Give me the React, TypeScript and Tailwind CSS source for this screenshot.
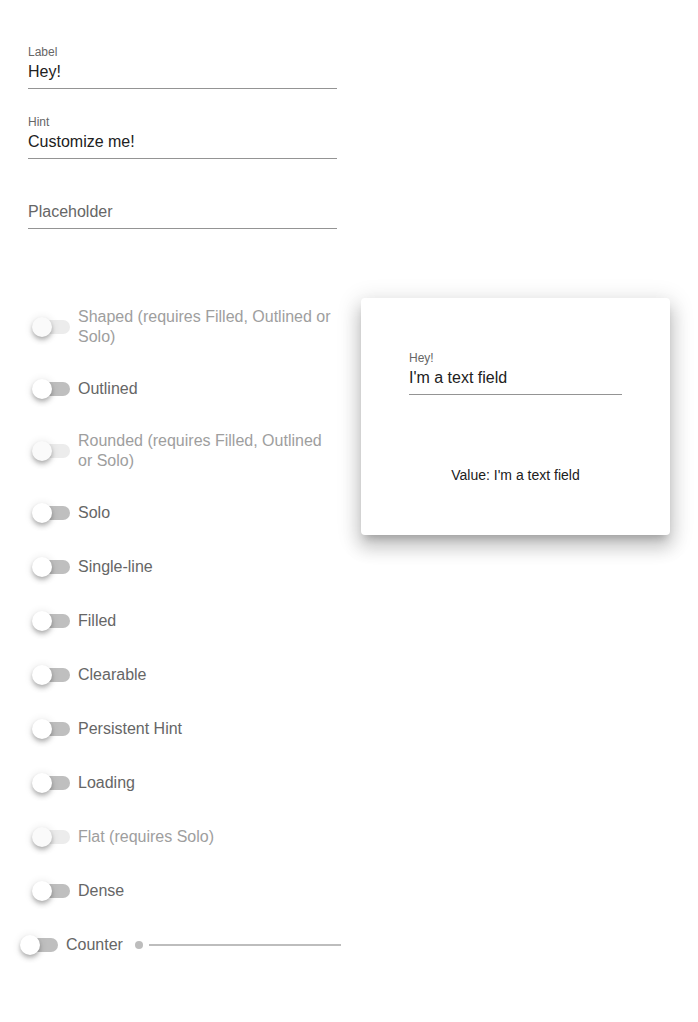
import React from 'react';

type Toggle = { label: string; disabled?: boolean };

const toggles: Toggle[] = [
  { label: 'Shaped (requires Filled, Outlined or Solo)', disabled: true },
  { label: 'Outlined' },
  { label: 'Rounded (requires Filled, Outlined or Solo)', disabled: true },
  { label: 'Solo' },
  { label: 'Single-line' },
  { label: 'Filled' },
  { label: 'Clearable' },
  { label: 'Persistent Hint' },
  { label: 'Loading' },
  { label: 'Flat (requires Solo)', disabled: true },
  { label: 'Dense' },
];

// Underlined text field, label floating above the value
function TextField({ label, value }: { label?: string; value: string }) {
  const floating = !!label;
  return (
    <div className="flex flex-col">
      <div className="h-4 text-xs leading-4 text-[#666]">{label}</div>
      <div
        className={`mt-[2px] pb-[6px] border-b border-[#949494] text-base leading-5 ${
          floating ? 'text-[#212121]' : 'text-[#666]'
        }`}
      >
        {value}
      </div>
    </div>
  );
}

function Switch({ disabled }: { disabled?: boolean }) {
  return (
    <div className="relative ml-1 w-[38px] h-6 flex-shrink-0 flex items-center">
      <div
        className={`ml-[2px] w-9 h-[14px] rounded-full ${disabled ? 'bg-[#ececec]' : 'bg-[#bfbfbf]'}`}
      />
      <div
        className={`absolute left-0 top-[2px] w-5 h-5 rounded-full ${
          disabled ? 'bg-[#fafafa]' : 'bg-white'
        } shadow-[0_2px_4px_-1px_rgba(0,0,0,0.2),0_4px_5px_0_rgba(0,0,0,0.14),0_1px_10px_0_rgba(0,0,0,0.12)]`}
      />
    </div>
  );
}

function SwitchRow({ label, disabled }: Toggle) {
  return (
    <div className="flex items-center pt-5 pb-[10px]">
      <Switch disabled={disabled} />
      <span className={`ml-2 text-base leading-5 ${disabled ? 'text-[#9e9e9e]' : 'text-[#666]'}`}>
        {label}
      </span>
    </div>
  );
}

export default function App() {
  return (
    <div className="min-h-screen bg-white font-['Liberation_Sans',Arial,sans-serif] px-7 pt-[44px]">
      {/* Text field options */}
      <div className="w-[309px] flex flex-col gap-[25px]">
        <TextField label="Label" value="Hey!" />
        <TextField label="Hint" value="Customize me!" />
        <TextField value="Placeholder" />
      </div>

      <div className="mt-[58px] grid grid-cols-2 gap-x-6 items-start">
        {/* Switches */}
        <div className="flex flex-col">
          {toggles.map((t) => (
            <SwitchRow key={t.label} {...t} />
          ))}
          <div className="flex items-center pt-5 pb-[10px] -ml-3 -mr-1">
            <Switch />
            <span className="ml-2 text-base leading-5 text-[#666]">Counter</span>
            <div className="ml-3 flex-1 flex items-center">
              <div className="w-2 h-2 rounded-full bg-[#bdbdbd]" />
              <div className="ml-[6px] flex-1 h-[2px] bg-[#bdbdbd]" />
            </div>
          </div>
        </div>

        {/* Preview card */}
        <div className="mt-[11px] bg-white rounded px-12 pt-[52px] pb-[50px] shadow-[0_7px_8px_-4px_rgba(0,0,0,0.2),0_12px_17px_2px_rgba(0,0,0,0.14),0_5px_22px_4px_rgba(0,0,0,0.12)]">
          <TextField label="Hey!" value="I'm a text field" />
          <div className="mt-[70px] text-center text-sm leading-5 text-[#212121]">
            Value: I'm a text field
          </div>
        </div>
      </div>
    </div>
  );
}
